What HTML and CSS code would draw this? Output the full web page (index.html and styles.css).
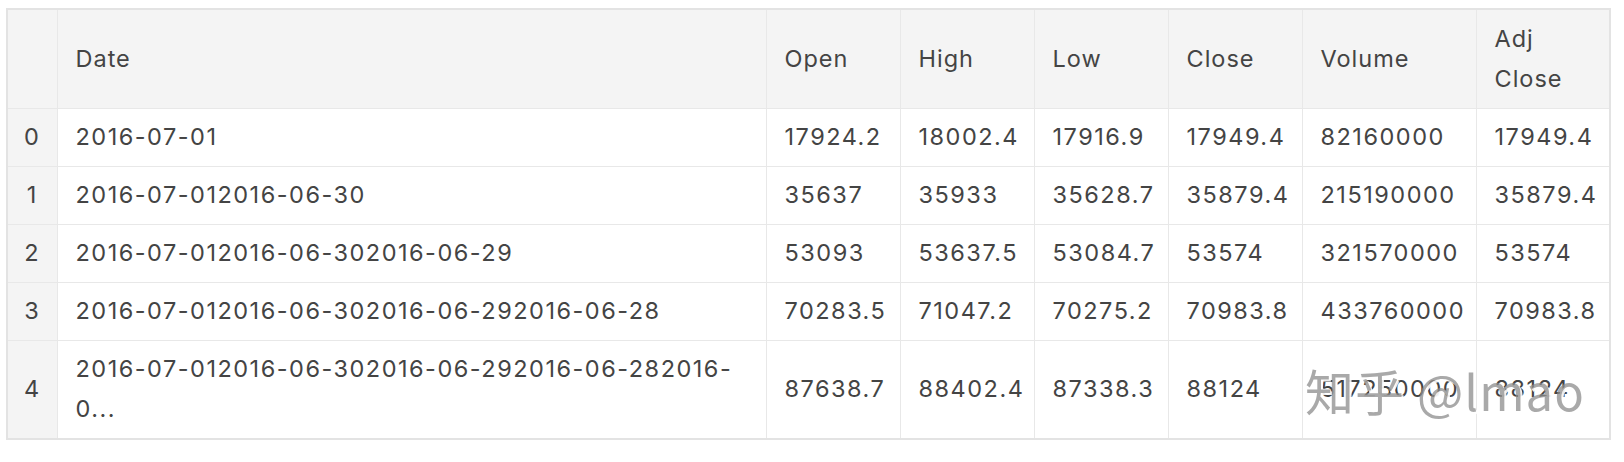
FILE: index.html
```html
<!DOCTYPE html>
<html lang="en">
<head>
<meta charset="utf-8">
<title>DataFrame</title>
<link rel="stylesheet" href="styles.css">
</head>
<body>
<div class="wrap">
  <table class="df">
    <colgroup>
      <col class="c-idx"><col class="c-date"><col class="c-num"><col class="c-num"><col class="c-num"><col class="c-num"><col class="c-vol"><col class="c-num">
    </colgroup>
    <thead>
      <tr>
        <th class="idx"></th>
        <th>Date</th>
        <th>Open</th>
        <th>High</th>
        <th>Low</th>
        <th>Close</th>
        <th>Volume</th>
        <th class="wrapcell">Adj Close</th>
      </tr>
    </thead>
    <tbody>
      <tr>
        <td class="idx">0</td><td class="date">2016-07-01</td><td>17924.2</td><td>18002.4</td><td>17916.9</td><td>17949.4</td><td>82160000</td><td>17949.4</td>
      </tr>
      <tr>
        <td class="idx">1</td><td class="date">2016-07-012016-06-30</td><td>35637</td><td>35933</td><td>35628.7</td><td>35879.4</td><td>215190000</td><td>35879.4</td>
      </tr>
      <tr>
        <td class="idx">2</td><td class="date">2016-07-012016-06-302016-06-29</td><td>53093</td><td>53637.5</td><td>53084.7</td><td>53574</td><td>321570000</td><td>53574</td>
      </tr>
      <tr>
        <td class="idx">3</td><td class="date">2016-07-012016-06-302016-06-292016-06-28</td><td>70283.5</td><td>71047.2</td><td>70275.2</td><td>70983.8</td><td>433760000</td><td>70983.8</td>
      </tr>
      <tr>
        <td class="idx">4</td><td class="date">2016-07-012016-06-302016-06-292016-06-282016-0...</td><td>87638.7</td><td>88402.4</td><td>87338.3</td><td>88124</td><td>517250000</td><td>88124</td>
      </tr>
    </tbody>
  </table>
  <div class="watermark">知乎 @lmao</div>
</div>
</body>
</html>
```
FILE: styles.css
```css
html, body {
  margin: 0;
  padding: 0;
  background: #ffffff;
}
body {
  padding: 8px 0 0 6px;
}
.wrap {
  position: relative;
  width: 1604px;
}
.df {
  border-collapse: collapse;
  table-layout: fixed;
  width: 1604px;
  font-family: Inter, "Noto Sans", "Liberation Sans", sans-serif;
  font-size: 23.5px;
  line-height: 40px;
  color: #444444;
  border: 2px solid #e3e3e3;
}
.c-idx { width: 50px; }
.c-date { width: 709px; }
.c-num { width: 134px; }
.c-vol { width: 174px; }
.df th, .df td {
  border: 1px solid #e8e8e8;
  padding: 8px 10px 9px 18px;
  text-align: left;
  vertical-align: middle;
  font-weight: 400;
  letter-spacing: 1.5px;
  white-space: nowrap;
}
.df th {
  letter-spacing: 1px;
}
.df td.date, .df th.wrapcell {
  white-space: normal;
}
.df th.wrapcell {
  padding-right: 17px;
}
.df td.date {
  padding-right: 18px;
}
.df th {
  background: #f4f4f4;
  padding-top: 9px;
  padding-bottom: 9px;
}
.df td.idx, .df th.idx {
  background: #f4f4f4;
  text-align: center;
  padding-left: 0;
  padding-right: 0;
}
.watermark {
  position: absolute;
  left: 1299px;
  top: 352px;
  font-family: "Noto Sans CJK SC", "Liberation Sans", sans-serif;
  font-size: 49px;
  line-height: 60px;
  color: rgba(140, 140, 140, 0.75);
  text-shadow: 2px 2px 0 rgba(255, 255, 255, 0.9);
  letter-spacing: 1px;
  white-space: nowrap;
}
```
